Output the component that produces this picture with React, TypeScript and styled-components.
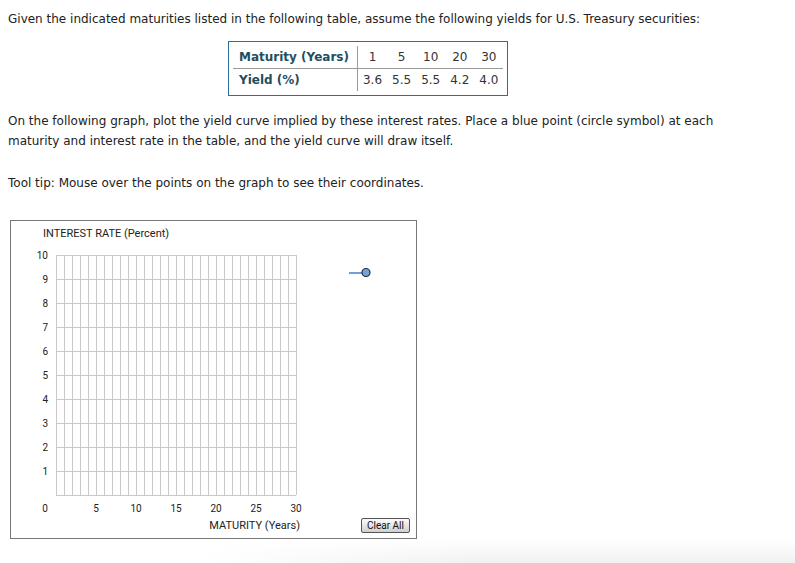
import styled, { createGlobalStyle } from 'styled-components';

const GlobalStyle = createGlobalStyle`
  html, body {
    margin: 0;
    padding: 0;
    background: #ffffff;
  }
  body {
    font-family: 'DejaVu Sans', Verdana, sans-serif;
    font-size: 12px;
    color: #222222;
  }
`;

const maturities = [1, 5, 10, 20, 30];
const yields = ['3.6', '5.5', '5.5', '4.2', '4.0'];

const GRID_X = 45;
const GRID_Y = 34;
const GRID_SIZE = 240;
const COL = 8;
const ROW = 24;

const Page = styled.div`
  width: 795px;
  height: 563px;
  overflow: hidden;
  display: flex;
  flex-direction: column;
  padding: 9px 0 0 8px;
  box-sizing: border-box;
`;

const Text = styled.p<{ $gap?: number }>`
  margin: ${(p) => p.$gap ?? 0}px 0 0;
  line-height: 20px;
  color: #222222;
  white-space: nowrap;
`;

const TableBox = styled.div`
  align-self: flex-start;
  margin: 12px 0 0 220px;
  border: 1px solid #2d6e98;
  padding: 4px;
`;

const DataTable = styled.table`
  border-collapse: collapse;
  font-size: 12px;
`;

const HeadCell = styled.th`
  text-align: left;
  font-weight: bold;
  color: #1f4e5e;
  padding: 0 8px 0 6px;
  height: 22px;
  border-right: 1px solid #9a9a9a;
  white-space: nowrap;
`;

const ValueCell = styled.td`
  text-align: center;
  padding: 0 5px;
  height: 22px;
  color: #333333;
`;

const TopRow = styled.tr`
  border-bottom: 1px solid #9a9a9a;
`;

const ChartBox = styled.div`
  margin-top: 27px;
  margin-left: 2px;
  width: 405px;
  height: 317px;
  border: 1px solid #777777;
  display: grid;
  grid-template: 1fr / 1fr;
`;

const Plot = styled.svg`
  grid-area: 1 / 1;
  display: block;
  font-family: Roboto, 'Liberation Sans', sans-serif;
  fill: #222222;
`;

const ClearButton = styled.button`
  grid-area: 1 / 1;
  justify-self: end;
  align-self: end;
  margin: 0 6px 5px 0;
  width: 49px;
  height: 15px;
  padding: 0;
  font-family: Roboto, 'Liberation Sans', sans-serif;
  font-size: 10px;
  color: #111111;
  border: 1px solid #555555;
  border-radius: 2px;
  background: linear-gradient(to bottom, #fbfbfb 0%, #e6e6e6 50%, #cfcfcf 100%);
  line-height: 13px;
  cursor: pointer;
`;

const Shade = styled.div`
  flex: 1;
  margin: 1px 0 0 -8px;
  background:
    linear-gradient(to right, #ffffff 25%, rgba(255, 255, 255, 0) 60%),
    linear-gradient(to bottom, #ffffff 0%, #f1f1f1 100%);
`;

const Chart = () => {
  const vLines = Array.from({ length: GRID_SIZE / COL + 1 }, (_, i) => GRID_X + i * COL);
  const hLines = Array.from({ length: 11 }, (_, i) => GRID_Y + i * ROW);
  const xTicks = [5, 10, 15, 20, 25, 30];

  return (
    <Plot width={405} height={317}>
      <text x={32} y={16} fontSize={11}>
        INTEREST RATE (Percent)
      </text>
      <g stroke="#c9c9c9" strokeWidth={1} shapeRendering="crispEdges">
        {vLines.map((x) => (
          <line key={`v${x}`} x1={x + 0.5} y1={GRID_Y} x2={x + 0.5} y2={GRID_Y + GRID_SIZE} />
        ))}
        {hLines.map((y) => (
          <line key={`h${y}`} x1={GRID_X} y1={y + 0.5} x2={GRID_X + GRID_SIZE} y2={y + 0.5} />
        ))}
      </g>
      {Array.from({ length: 10 }, (_, i) => 10 - i).map((v) => (
        <text
          key={`y${v}`}
          x={37}
          y={GRID_Y + (10 - v) * ROW + 4}
          fontSize={10}
          textAnchor="end"
        >
          {v}
        </text>
      ))}
      <text x={34} y={291} fontSize={10} textAnchor="middle">
        0
      </text>
      {xTicks.map((t) => (
        <text key={`x${t}`} x={GRID_X + t * COL} y={291} fontSize={10} textAnchor="middle">
          {t}
        </text>
      ))}
      <text x={289} y={308} fontSize={11} textAnchor="end">
        MATURITY (Years)
      </text>
      <line x1={338} y1={52} x2={351} y2={52} stroke="#6e9fd6" strokeWidth={2} />
      <circle cx={355} cy={51.5} r={4} fill="#6ea6e4" stroke="#2b2b2b" strokeWidth={1.2} />
    </Plot>
  );
};

export default function App() {
  return (
    <>
      <GlobalStyle />
      <Page>
        <Text>
          Given the indicated maturities listed in the following table, assume the following yields
          for U.S. Treasury securities:
        </Text>
        <TableBox>
          <DataTable>
            <tbody>
              <TopRow>
                <HeadCell>Maturity (Years)</HeadCell>
                {maturities.map((m) => (
                  <ValueCell key={m}>{m}</ValueCell>
                ))}
              </TopRow>
              <tr>
                <HeadCell>Yield (%)</HeadCell>
                {yields.map((y, i) => (
                  <ValueCell key={i}>{y}</ValueCell>
                ))}
              </tr>
            </tbody>
          </DataTable>
        </TableBox>
        <Text $gap={15}>
          On the following graph, plot the yield curve implied by these interest rates. Place a blue
          point (circle symbol) at each
          <br />
          maturity and interest rate in the table, and the yield curve will draw itself.
        </Text>
        <Text $gap={22}>Tool tip: Mouse over the points on the graph to see their coordinates.</Text>
        <ChartBox>
          <Chart />
          <ClearButton>Clear All</ClearButton>
        </ChartBox>
        <Shade />
      </Page>
    </>
  );
}
